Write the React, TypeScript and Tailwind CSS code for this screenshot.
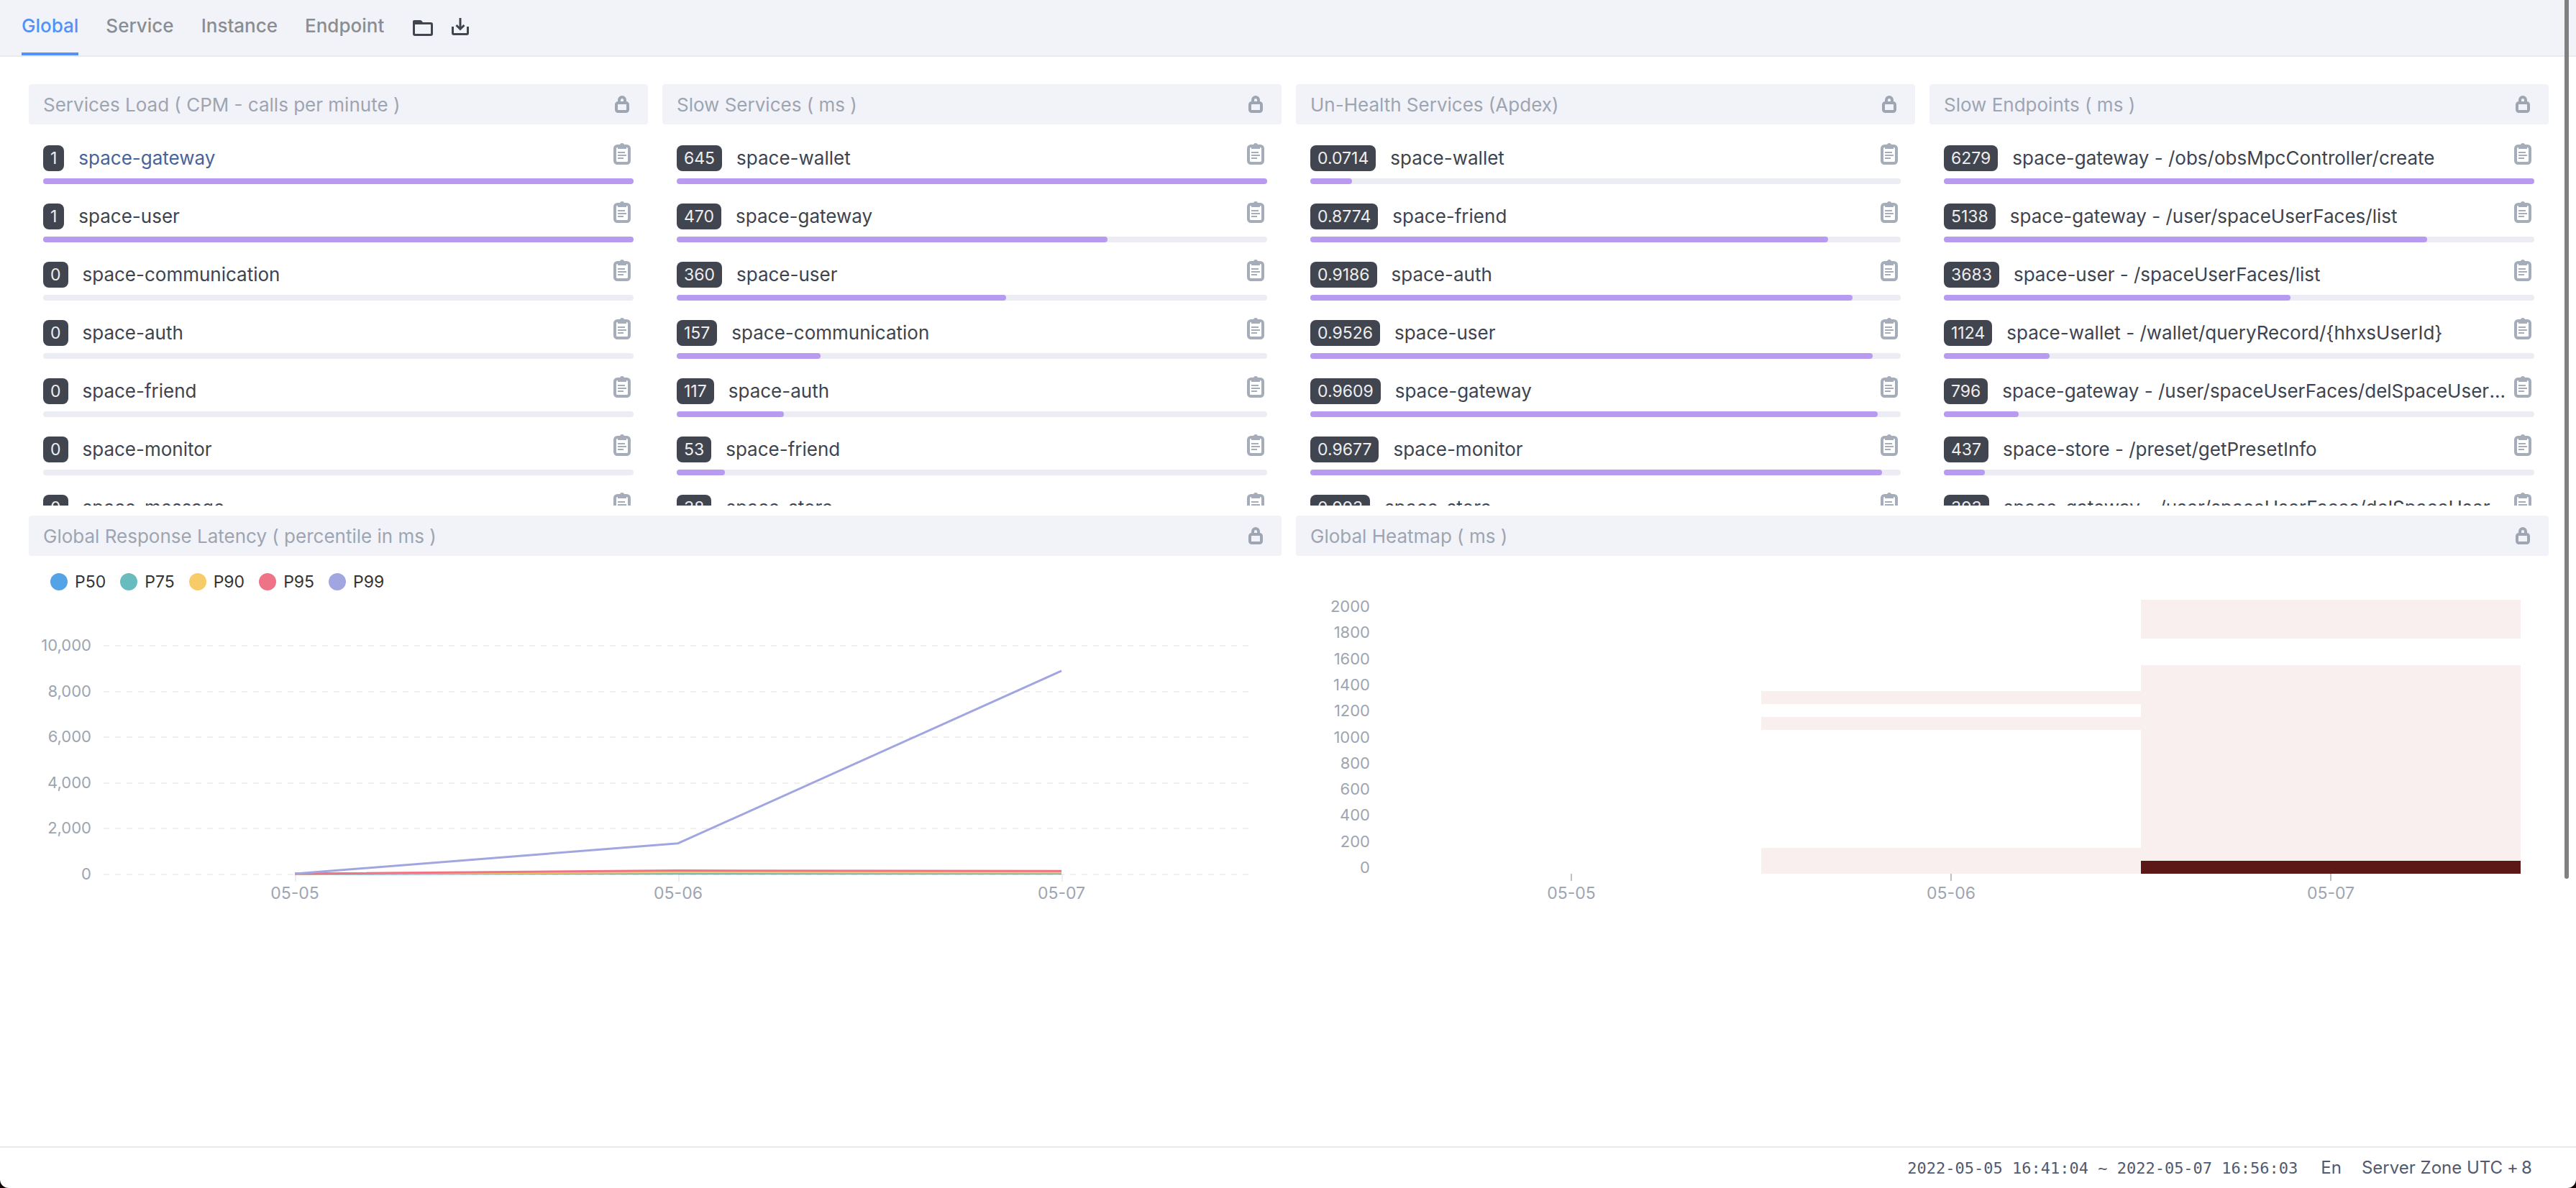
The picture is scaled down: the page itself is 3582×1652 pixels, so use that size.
import React, { useState } from "react";

interface RankItem {
  value: string;
  name: string;
  percent: number;
}

interface RankPanel {
  title: string;
  items: RankItem[];
}

const tabs = ["Global", "Service", "Instance", "Endpoint"];

const panels: RankPanel[] = [
  {
    title: "Services Load ( CPM - calls per minute )",
    items: [
      { value: "1", name: "space-gateway", percent: 100 },
      { value: "1", name: "space-user", percent: 100 },
      { value: "0", name: "space-communication", percent: 0 },
      { value: "0", name: "space-auth", percent: 0 },
      { value: "0", name: "space-friend", percent: 0 },
      { value: "0", name: "space-monitor", percent: 0 },
      { value: "0", name: "space-message", percent: 0 },
    ],
  },
  {
    title: "Slow Services ( ms )",
    items: [
      { value: "645", name: "space-wallet", percent: 100 },
      { value: "470", name: "space-gateway", percent: 72.9 },
      { value: "360", name: "space-user", percent: 55.8 },
      { value: "157", name: "space-communication", percent: 24.3 },
      { value: "117", name: "space-auth", percent: 18.1 },
      { value: "53", name: "space-friend", percent: 8.2 },
      { value: "38", name: "space-store", percent: 5.9 },
    ],
  },
  {
    title: "Un-Health Services (Apdex)",
    items: [
      { value: "0.0714", name: "space-wallet", percent: 7.1 },
      { value: "0.8774", name: "space-friend", percent: 87.7 },
      { value: "0.9186", name: "space-auth", percent: 91.9 },
      { value: "0.9526", name: "space-user", percent: 95.3 },
      { value: "0.9609", name: "space-gateway", percent: 96.1 },
      { value: "0.9677", name: "space-monitor", percent: 96.8 },
      { value: "0.993", name: "space-store", percent: 99.3 },
    ],
  },
  {
    title: "Slow Endpoints ( ms )",
    items: [
      { value: "6279", name: "space-gateway - /obs/obsMpcController/create", percent: 100 },
      { value: "5138", name: "space-gateway - /user/spaceUserFaces/list", percent: 81.8 },
      { value: "3683", name: "space-user - /spaceUserFaces/list", percent: 58.7 },
      { value: "1124", name: "space-wallet - /wallet/queryRecord/{hhxsUserId}", percent: 17.9 },
      { value: "796", name: "space-gateway - /user/spaceUserFaces/delSpaceUserFaces", percent: 12.7 },
      { value: "437", name: "space-store - /preset/getPresetInfo", percent: 7 },
      { value: "393", name: "space-gateway - /user/spaceUserFaces/delSpaceUserFaces", percent: 6.3 },
    ],
  },
];

const legend = [
  { name: "P50", color: "bg-[#54a3e6]" },
  { name: "P75", color: "bg-[#69bcbe]" },
  { name: "P90", color: "bg-[#f7cc68]" },
  { name: "P95", color: "bg-[#ee7387]" },
  { name: "P99", color: "bg-[#a2a6e0]" },
];

const series = [
  { color: "#54a3e6", values: [0, 10, 10] },
  { color: "#69bcbe", values: [0, 30, 25] },
  { color: "#f7cc68", values: [0, 70, 60] },
  { color: "#ee7387", values: [0, 140, 120] },
  { color: "#a2a6e0", values: [0, 1330, 8870] },
];

const days = ["05-05", "05-06", "05-07"];

// [day, first bucket, bucket count, color]
const heat: [number, number, number, string][] = [
  [1, 0, 2, "#f9efee"],
  [1, 11, 1, "#f9efee"],
  [1, 13, 1, "#f9efee"],
  [2, 1, 15, "#f9efee"],
  [2, 18, 3, "#f9efee"],
  [2, 0, 1, "#5c1816"],
];

const LockIcon = () => (
  <svg className="h-6 w-5" viewBox="0 0 20 24" fill="none" stroke="#9ea6b4" strokeWidth="4">
    <rect x="2" y="10" width="16" height="12" rx="2.5" />
    <path d="M6 9V6a4 4 0 0 1 8 0v3" />
  </svg>
);

const ClipboardIcon = () => (
  <svg className="h-[30px] w-6" viewBox="0 0 24 30" fill="#a6adba">
    <rect x="2" y="4" width="20" height="24" rx="3.5" fill="none" stroke="#a6adba" strokeWidth="4" />
    <path d="M6 3h3a3 3 0 0 1 6 0h3v5H6z" />
    <path d="M6 12h10v2H6zM6 16h12v2H6zM6 20h8v2H6z" />
  </svg>
);

const FolderIcon = () => (
  <svg className="h-[22px] w-7" viewBox="0 0 28 22" fill="none">
    <path d="M0 6V2a2 2 0 0 1 2-2h8.500a2 2 0 0 1 1.400.6L14 3v3z" fill="#40454f" />
    <rect x="1.500" y="4.500" width="25" height="16" rx="1.500" stroke="#40454f" strokeWidth="3" />
  </svg>
);

const DownloadIcon = () => (
  <svg className="h-6 w-6" viewBox="0 0 24 24" fill="none" stroke="#40454f" strokeWidth="3">
    <path d="M1.500 12v9a1.500 1.500 0 0 0 1.500 1.500h18a1.500 1.500 0 0 0 1.500-1.500v-9" />
    <path d="M12 0v15M6.500 10l5.500 5.500 5.500-5.500" />
  </svg>
);

const PanelHeader: React.FC<{ title: string }> = ({ title }) => (
  <div className="flex h-14 items-center justify-between rounded bg-[#f2f3f8] pr-[26px] pl-5">
    <h2 className="text-[26px] text-[#9da5b2]">{title}</h2>
    <button type="button" aria-label="Lock panel">
      <LockIcon />
    </button>
  </div>
);

const RankList: React.FC<{ panel: RankPanel; linkFirst: boolean }> = ({ panel, linkFirst }) => (
  <section>
    <PanelHeader title={panel.title} />
    <ul className="h-[530px] overflow-hidden px-5 pt-[26px]">
      {panel.items.map((item, i) => (
        <li key={i} className="mb-6">
          <div className="flex h-[49px] items-start">
            <span className="mt-[3px] mr-5 h-9 shrink-0 rounded-lg bg-[#40454f] px-[10px] text-[23px] leading-9 text-[#eeeeee]">
              {item.value}
            </span>
            <span
              className={`mt-[3px] min-w-0 flex-1 truncate text-[26px] leading-9 ${
                linkFirst && i === 0 ? "text-[#46639c]" : "text-[#3d444f]"
              }`}
            >
              {item.name}
            </span>
            <button type="button" aria-label={`Copy ${item.name}`} className="mr-1 ml-2 shrink-0">
              <ClipboardIcon />
            </button>
          </div>
          <div className="h-2 rounded bg-[#ececf5]">
            <div className="h-2 rounded bg-[#b89af0]" style={{ width: `${item.percent}%` }} />
          </div>
        </li>
      ))}
    </ul>
  </section>
);

const LatencyChart = () => {
  const x = (i: number) => 370 + i * 533;
  const y = (v: number) => 442 - (v / 10000) * 318;

  return (
    <div className="relative">
      <ul className="absolute top-6 left-[30px] flex gap-5">
        {legend.map((item) => (
          <li key={item.name} className="flex items-center gap-[10px] text-[23px] leading-6 text-[#333333]">
            <span className={`size-6 rounded-full ${item.color}`} />
            {item.name}
          </li>
        ))}
      </ul>
      <svg className="w-full" viewBox="0 0 1742 500" fill="none">
        {[0, 2000, 4000, 6000, 8000, 10000].map((v) => (
          <g key={v}>
            <path d={`M104 ${Math.round(y(v)) + 1}H1702`} stroke="#efefef" strokeWidth="2" strokeDasharray="8 8" />
            <text x="87" y={y(v) + 8} textAnchor="end" fontSize="22" fill="#9da5b2">
              {v.toLocaleString("en-US")}
            </text>
          </g>
        ))}
        {days.map((day, i) => (
          <g key={day}>
            <path d={`M${x(i) + 1} 443v10`} stroke="#eeeeee" strokeWidth="2" />
            <text x={x(i)} y="477" textAnchor="middle" fontSize="23" fill="#9da5b2">
              {day}
            </text>
          </g>
        ))}
        {series.map((s) => (
          <polyline
            key={s.color}
            points={s.values.map((v, i) => `${x(i)},${y(v)}`).join(" ")}
            stroke={s.color}
            strokeWidth="3"
            strokeLinejoin="bevel"
          />
        ))}
      </svg>
    </div>
  );
};

const HeatmapChart = () => {
  const left = 119;
  const cellWidth = 528;
  const cellHeight = 381 / 21;
  const bottom = 442;

  return (
    <svg className="w-full" viewBox="0 0 1742 500" fill="none">
      {[0, 200, 400, 600, 800, 1000, 1200, 1400, 1600, 1800, 2000].map((v) => (
        <text
          key={v}
          x="103"
          y={bottom - (v / 100 + 0.5) * cellHeight + 8}
          textAnchor="end"
          fontSize="22"
          fill="#9da5b2"
        >
          {v}
        </text>
      ))}
      {heat.map(([day, start, count, color], i) => (
        <rect
          key={i}
          x={left + day * cellWidth}
          y={Math.round(bottom - (start + count) * cellHeight)}
          width={cellWidth}
          height={Math.round(count * cellHeight)}
          fill={color}
        />
      ))}
      {days.map((day, i) => (
        <g key={day}>
          <path d={`M${left + (i + 0.5) * cellWidth} 442v10`} stroke="#bbbfc6" strokeWidth="2" />
          <text x={left + (i + 0.5) * cellWidth} y="477" textAnchor="middle" fontSize="23" fill="#9da5b2">
            {day}
          </text>
        </g>
      ))}
    </svg>
  );
};

export default function App() {
  const [activeTab, setActiveTab] = useState("Global");
  const [utc, setUtc] = useState("8");

  return (
    <div className="h-screen bg-[#140506] font-['Inter',sans-serif]">
      <div className="relative flex h-full flex-col overflow-hidden rounded-b-xl bg-white">
        <header className="flex shrink-0 items-start border-b-2 border-[#e9eaec] bg-[#f2f3f8] px-[30px]">
          <nav className="flex gap-[38px]">
            {tabs.map((tab) => (
              <button
                key={tab}
                type="button"
                onClick={() => setActiveTab(tab)}
                className={`h-[77px] border-b-4 pb-[2px] text-[26px] font-medium ${
                  activeTab === tab ? "border-[#5490f8] text-[#5490f8]" : "border-transparent text-[#8a8d93]"
                }`}
              >
                {tab}
              </button>
            ))}
          </nav>
          <div className="ml-10 flex items-center gap-[26px] pt-6">
            <button type="button" aria-label="Open template" className="pt-1">
              <FolderIcon />
            </button>
            <button type="button" aria-label="Download template">
              <DownloadIcon />
            </button>
          </div>
        </header>

        <main className="min-h-0 flex-1 overflow-hidden pt-[38px] pr-[38px] pl-10">
          <div className="grid grid-cols-4 gap-x-5">
            {panels.map((panel, i) => (
              <RankList key={panel.title} panel={panel} linkFirst={i === 0} />
            ))}
          </div>
          <div className="mt-[14px] grid grid-cols-2 gap-x-5">
            <section>
              <PanelHeader title="Global Response Latency ( percentile in ms )" />
              <LatencyChart />
            </section>
            <section>
              <PanelHeader title="Global Heatmap ( ms )" />
              <HeatmapChart />
            </section>
          </div>
        </main>

        <footer className="flex h-[58px] shrink-0 items-center justify-end border-t-2 border-[#eaeaea] pr-[60px] text-[24px] text-[#515a6e]">
          <span className="mr-8 font-['DejaVu_Sans_Mono',monospace] text-[22px]">
            2022-05-05 16:41:04 ~ 2022-05-07 16:56:03
          </span>
          <button type="button" className="mr-7">
            En
          </button>
          <label htmlFor="utc" className="mr-[6px]">
            Server Zone UTC
          </label>
          <span>+</span>
          <input
            id="utc"
            value={utc}
            onChange={(e) => setUtc(e.target.value)}
            className="ml-1 w-4 outline-none"
          />
        </footer>

        {/* Scroll thumb */}
        <div className="absolute top-0 right-[10px] h-[74%] w-[6px] rounded-b-full bg-[#808080]" />
      </div>
    </div>
  );
}
